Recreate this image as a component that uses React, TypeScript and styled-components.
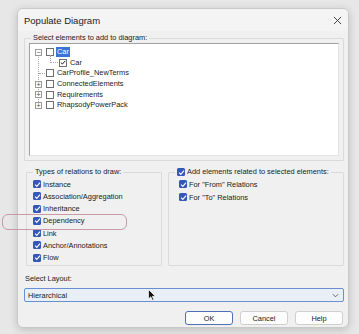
import React from 'react';
import styled, { createGlobalStyle } from 'styled-components';

const GlobalStyle = createGlobalStyle`
  html, body {
    margin: 0;
    padding: 0;
    background: #e7e7e7;
  }
  * {
    box-sizing: border-box;
  }
`;

const FONT = `'Liberation Sans', Arial, sans-serif`;
const SMALL = '7.4px';

const Page = styled.div`
  position: relative;
  width: 359px;
  height: 334px;
  padding: 8px 0 0 17px;
  font-family: ${FONT};
  color: #1a1a1a;
  overflow: hidden;
`;

const Window = styled.div`
  width: 332px;
  height: 320px;
  display: flex;
  flex-direction: column;
  background: #f0f0f0;
  border: 1px solid #c9c9c9;
  border-radius: 6px;
  box-shadow: 0 2px 8px rgba(0, 0, 0, 0.18);
  overflow: hidden;
`;

const TitleBar = styled.div`
  height: 22px;
  display: flex;
  align-items: center;
  justify-content: space-between;
  padding: 0 6px 0 6px;
  background: #f4f4f5;
  font-size: 9.5px;
  color: #1b1b1b;
`;

const Body = styled.div`
  flex: 1;
  display: flex;
  flex-direction: column;
  padding: 2px 4px 0 6px;
`;

const Group = styled.fieldset<{ $height: number }>`
  margin: 0;
  padding: 0 4px 3px 4px;
  height: ${(p) => p.$height}px;
  border: 1px solid #dadada;
  border-radius: 1px;
  min-width: 0;
`;

const Legend = styled.legend`
  padding: 0 2px;
  margin-left: 2px;
  font-size: ${SMALL};
  line-height: 10px;
  white-space: nowrap;
  display: flex;
  align-items: center;
  gap: 2px;
`;

const TreeBox = styled.div`
  height: 113px;
  background: #fff;
  border-top: 1px solid #a0a0a0;
  border-left: 1px solid #a0a0a0;
  border-right: 1px solid #e3e3e3;
  border-bottom: 1px solid #e3e3e3;
  padding: 3px 0 0 5px;
  display: flex;
  flex-direction: column;
`;

const TreeRow = styled.div<{ $indent: number }>`
  height: 10.6px;
  display: flex;
  align-items: center;
  padding-left: ${(p) => p.$indent}px;
  font-size: ${SMALL};
  position: relative;
`;

const Expander = styled.span`
  width: 7px;
  height: 7px;
  border: 1px solid #9a9a9a;
  background: #fff;
  font-size: 7px;
  line-height: 5px;
  text-align: center;
  color: #444;
  margin-right: 4px;
  flex: none;
  position: relative;
  z-index: 1;
`;

const Connector = styled.span<{ $width: number }>`
  width: ${(p) => p.$width}px;
  border-top: 1px dotted #a6a6a6;
  margin-right: 1px;
  flex: none;
`;

const TreeCheck = styled.span`
  width: 8px;
  height: 8px;
  border: 1px solid #6e6e6e;
  background: #fff;
  margin-right: 2px;
  flex: none;
  display: flex;
  align-items: center;
  justify-content: center;
`;

const TreeLabel = styled.span<{ $selected?: boolean }>`
  padding: 0 1px;
  line-height: 10px;
  white-space: nowrap;
  background: ${(p) => (p.$selected ? '#3b73d6' : 'transparent')};
  color: ${(p) => (p.$selected ? '#fff' : '#1a1a1a')};
`;

const Guide = styled.span`
  position: absolute;
  left: 3px;
  top: 6px;
  height: 53px;
  border-left: 1px dotted #a6a6a6;
`;

const ChildGuide = styled.span`
  position: absolute;
  left: 15px;
  top: -3px;
  height: 8px;
  border-left: 1px dotted #a6a6a6;
`;

const Columns = styled.div`
  display: flex;
  gap: 6px;
  margin-top: 6px;
  padding-left: 2px;
`;

const CheckList = styled.div<{ $gap: number }>`
  display: flex;
  flex-direction: column;
  gap: ${(p) => p.$gap}px;
  padding-top: 2px;
`;

const CheckRow = styled.label<{ $indent?: number }>`
  display: flex;
  align-items: center;
  gap: 2px;
  height: 10px;
  font-size: ${SMALL};
  white-space: nowrap;
  padding-left: ${(p) => p.$indent ?? 0}px;
`;

const BlueBox = styled.span`
  width: 8px;
  height: 8px;
  border-radius: 1.5px;
  background: #3557b7;
  display: flex;
  align-items: center;
  justify-content: center;
  flex: none;
`;

const LayoutLabel = styled.div`
  font-size: ${SMALL};
  margin: 8px 0 0 1px;
  height: 10px;
`;

const Combo = styled.div`
  margin-top: 4px;
  height: 14px;
  display: flex;
  align-items: center;
  justify-content: space-between;
  padding: 0 4px 0 3px;
  background: #e8eff7;
  border: 1px solid #6a8ed2;
  border-radius: 2px;
  font-size: ${SMALL};
`;

const Buttons = styled.div`
  display: flex;
  justify-content: flex-end;
  gap: 7px;
  margin-top: 9px;
  padding-right: 1px;
`;

const Button = styled.button<{ $default?: boolean }>`
  width: 48px;
  height: 14px;
  padding: 0;
  font-family: ${FONT};
  font-size: ${SMALL};
  color: #1a1a1a;
  background: #fdfdfd;
  border: 1px solid ${(p) => (p.$default ? '#4d6fb8' : '#cfcfcf')};
  border-radius: 3px;
`;

const Highlight = styled.div`
  position: absolute;
  left: 2px;
  top: 214px;
  width: 125px;
  height: 16px;
  border: 1.5px solid #c79aa4;
  border-radius: 6px;
  pointer-events: none;
`;

const Cursor = styled.svg`
  position: absolute;
  left: 148px;
  top: 289px;
`;

const Tick = ({ color }: { color: string }) => (
  <svg width="7" height="7" viewBox="0 0 10 10">
    <path d="M1.5 5.2 L4 7.6 L8.6 2.4" fill="none" stroke={color} strokeWidth="1.6" />
  </svg>
);

const Blue = () => (
  <BlueBox>
    <Tick color="#fff" />
  </BlueBox>
);

const relations = [
  'Instance',
  'Association/Aggregation',
  'Inheritance',
  'Dependency',
  'Link',
  'Anchor/Annotations',
  'Flow',
];

export default function App() {
  return (
    <Page>
      <GlobalStyle />
      <Window>
        <TitleBar>
          <span>Populate Diagram</span>
          <svg width="9" height="9" viewBox="0 0 10 10">
            <path d="M1 1 L9 9 M9 1 L1 9" stroke="#333" strokeWidth="1" />
          </svg>
        </TitleBar>
        <Body>
          <Group $height={128}>
            <Legend>Select elements to add to diagram:</Legend>
            <TreeBox>
              <TreeRow $indent={0}>
                <Guide />
                <Expander>−</Expander>
                <TreeCheck />
                <TreeLabel $selected>Car</TreeLabel>
              </TreeRow>
              <TreeRow $indent={15}>
                <ChildGuide />
                <Connector $width={8} />
                <TreeCheck>
                  <Tick color="#111" />
                </TreeCheck>
                <TreeLabel>Car</TreeLabel>
              </TreeRow>
              <TreeRow $indent={4}>
                <Connector $width={6} />
                <TreeCheck />
                <TreeLabel>CarProfile_NewTerms</TreeLabel>
              </TreeRow>
              <TreeRow $indent={0}>
                <Expander>+</Expander>
                <TreeCheck />
                <TreeLabel>ConnectedElements</TreeLabel>
              </TreeRow>
              <TreeRow $indent={0}>
                <Expander>+</Expander>
                <TreeCheck />
                <TreeLabel>Requirements</TreeLabel>
              </TreeRow>
              <TreeRow $indent={0}>
                <Expander>+</Expander>
                <TreeCheck />
                <TreeLabel>RhapsodyPowerPack</TreeLabel>
              </TreeRow>
            </TreeBox>
          </Group>
          <Columns>
            <Group $height={99} style={{ flex: '0 0 136px' }}>
              <Legend>Types of relations to draw:</Legend>
              <CheckList $gap={2.3}>
                {relations.map((r) => (
                  <CheckRow key={r} $indent={2}>
                    <Blue />
                    {r}
                  </CheckRow>
                ))}
              </CheckList>
            </Group>
            <Group $height={99} style={{ flex: 1 }}>
              <Legend>
                <Blue />
                Add elements related to selected elements:
              </Legend>
              <CheckList $gap={3}>
                <CheckRow $indent={6}>
                  <Blue />
                  For "From" Relations
                </CheckRow>
                <CheckRow $indent={6}>
                  <Blue />
                  For "To" Relations
                </CheckRow>
              </CheckList>
            </Group>
          </Columns>
          <LayoutLabel>Select Layout:</LayoutLabel>
          <Combo>
            <span>Hierarchical</span>
            <svg width="7" height="5" viewBox="0 0 8 5">
              <path d="M1 1 L4 4 L7 1" fill="none" stroke="#555" strokeWidth="1" />
            </svg>
          </Combo>
          <Buttons>
            <Button $default>OK</Button>
            <Button>Cancel</Button>
            <Button>Help</Button>
          </Buttons>
        </Body>
      </Window>
      <Highlight />
      <Cursor width="8" height="12" viewBox="0 0 8 12">
        <path d="M0.5 0.5 L0.5 10 L2.8 7.8 L4.4 11.3 L5.8 10.7 L4.3 7.3 L7.3 7.3 Z" fill="#111" stroke="#fff" strokeWidth="0.7" />
      </Cursor>
    </Page>
  );
}
